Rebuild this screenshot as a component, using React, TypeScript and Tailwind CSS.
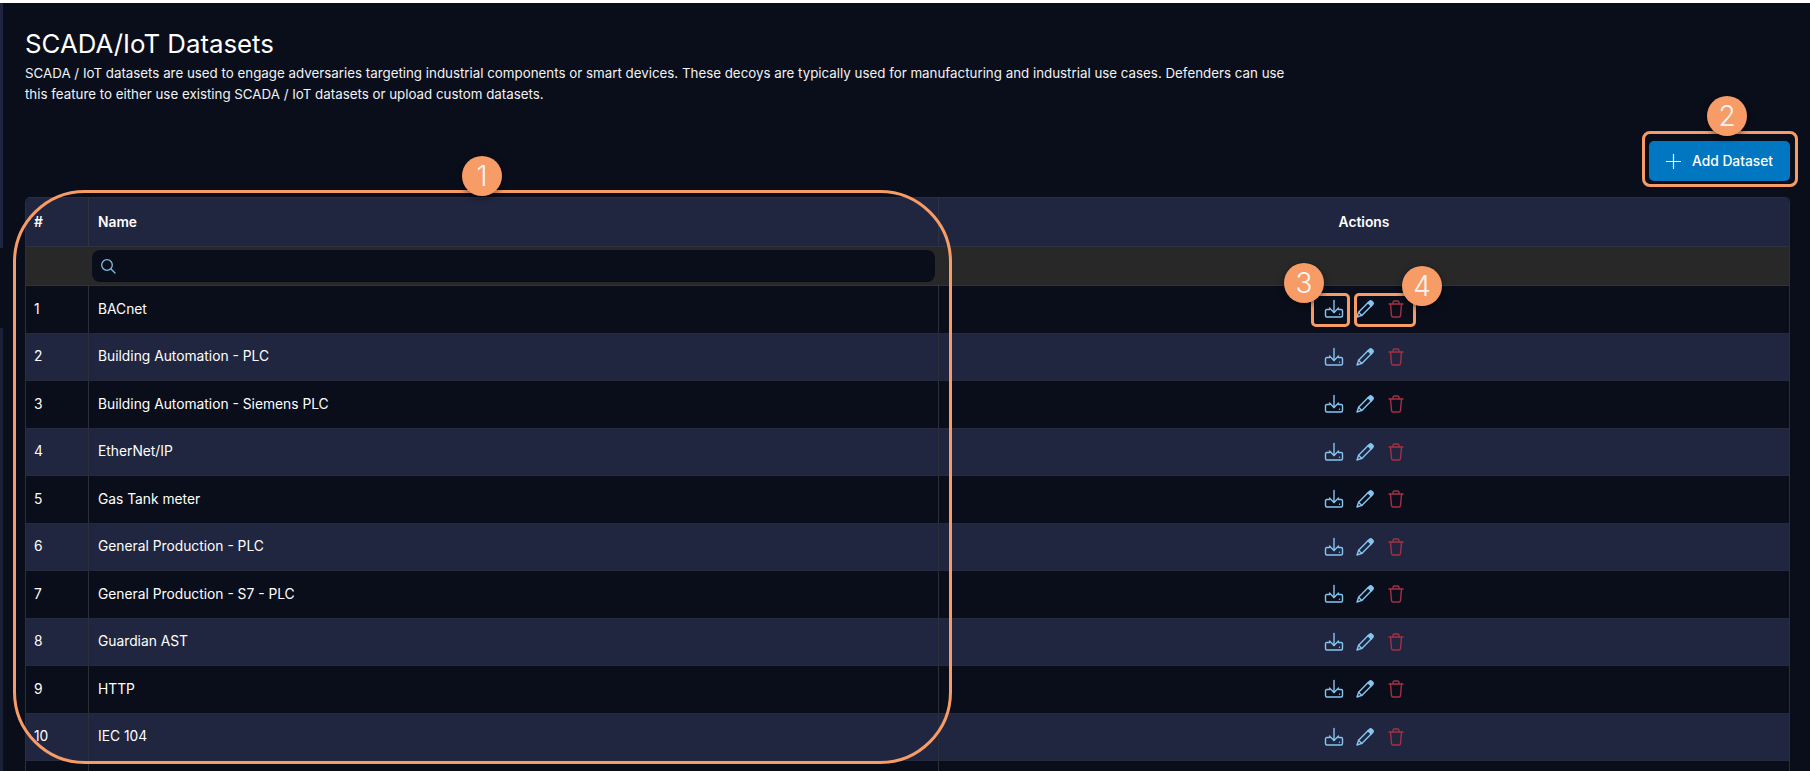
const rows = [
  'BACnet',
  'Building Automation - PLC',
  'Building Automation - Siemens PLC',
  'EtherNet/IP',
  'Gas Tank meter',
  'General Production - PLC',
  'General Production - S7 - PLC',
  'Guardian AST',
  'HTTP',
  'IEC 104',
];

function DownloadIcon() {
  return (
    <svg width="20" height="20" viewBox="0 0 20 20" fill="none" stroke="#86c5f0" strokeWidth="1.4" strokeLinecap="round" strokeLinejoin="round">
      <path d="M10 1.500v12" />
      <path d="M5.500 9l4.500 4.500L14.500 9" />
      <path d="M5.500 10.500H2.800c-.8 0-1.300.6-1.300 1.300v4.700c0 .8.6 1.500 1.400 1.500h14.200c.8 0 1.400-.7 1.400-1.500v-4.700c0-.7-.5-1.300-1.300-1.300h-2.700" />
      <path d="M15.500 15.300h.01" />
    </svg>
  );
}

function PencilIcon() {
  return (
    <svg width="20" height="20" viewBox="0 0 20 20" fill="none" stroke="#86c5f0" strokeWidth="1.4" strokeLinecap="round" strokeLinejoin="round">
      <path d="M13.200 3.600L3.600 13.200 2 18l4.800-1.600 9.600-9.600" />
      <path d="M3.600 13.200l3.200 3.200" />
      <path d="M13 3.800l1.600-1.600c.6-.6 1.500-.6 2.100 0l1.100 1.100c.6.6.6 1.500 0 2.100L16.200 7z" fill="#86c5f0" />
    </svg>
  );
}

function TrashIcon() {
  return (
    <svg width="20" height="20" viewBox="0 0 20 20" fill="none" stroke="#a33044" strokeWidth="1.4" strokeLinecap="round" strokeLinejoin="round">
      <path d="M3 5h14" />
      <path d="M7 4.800V3.500C7 2.700 7.600 2 8.400 2h3.200c.8 0 1.400.7 1.400 1.500v1.300" />
      <path d="M4.500 5l1 11.600c.1.800.7 1.400 1.500 1.400h6c.8 0 1.400-.6 1.500-1.400l1-11.600" />
    </svg>
  );
}

function SearchIcon() {
  return (
    <svg width="16" height="16" viewBox="0 0 16 16" fill="none" stroke="#7fbde6" strokeWidth="1.3" strokeLinecap="round">
      <circle cx="7" cy="7" r="5.300" />
      <path d="M11 11l4 4" />
    </svg>
  );
}

function Badge({ n, className }: { n: number; className: string }) {
  return (
    <div className={`absolute flex h-10 w-10 items-center justify-center rounded-full bg-[#f79c66] text-[28px] font-light text-[#f5f5f5] shadow-[0_2px_6px_rgba(0,0,0,0.5)] ${className}`}>
      {n}
    </div>
  );
}

export default function App() {
  return (
    <div className="relative flex h-[771px] w-[1810px] flex-col overflow-hidden bg-[#0a0e1a] font-['Inter',sans-serif] text-white">
      <div className="h-[3px] shrink-0 bg-white" />

      <div className="flex min-h-0 flex-1">
        {/* collapsed sidebar edge */}
        <div className="flex w-[3px] shrink-0 flex-col">
          <div className="h-[245px] bg-[#1f2540]" />
          <div className="h-[80px] bg-[#0a0e1a]" />
          <div className="flex-1 bg-[#1a2036]" />
        </div>

        <main className="min-w-0 flex-1 pl-[22px] pr-[20px]">
          <h1 className="mt-[27px] text-[25.8px] leading-[28px] font-normal">SCADA/IoT Datasets</h1>
          <p className="mt-[5px] w-[1270px] text-[13.33px] leading-[21px] text-[#f1f3f6]">
            SCADA / IoT datasets are used to engage adversaries targeting industrial components or smart devices. These decoys are typically used for manufacturing and industrial use cases. Defenders can use this feature to either use existing SCADA / IoT datasets or upload custom datasets.
          </p>

          <div className="mt-[36px] flex justify-end">
            <button className="flex h-10 w-[141px] items-center justify-center gap-[11px] rounded-[5px] bg-[#0077c0] text-[13.8px] font-medium">
              <svg width="15" height="15" viewBox="0 0 15 15" stroke="#fff" strokeWidth="1.2">
                <path d="M7.500 0v15M0 7.500h15" />
              </svg>
              Add Dataset
            </button>
          </div>

          <div className="mt-[16px] overflow-hidden rounded-t-[5px] border-x border-t border-[#2b2f38] text-[13.8px]">
            <div className="grid h-[48px] grid-cols-[63px_850px_1fr] items-stretch bg-[#20263f] font-semibold">
              <div className="flex items-center border-r border-[#2f3340] pl-[8px]">#</div>
              <div className="flex items-center border-r border-[#2f3340] pl-[9px]">Name</div>
              <div className="flex items-center justify-center">Actions</div>
            </div>
            <div className="grid h-[40px] grid-cols-[63px_850px_1fr] border-y border-[#2f333d] bg-[#282828]">
              <div />
              <div className="flex items-center pr-[4px] pl-[3px]">
                <div className="flex h-[32px] w-full items-center rounded-[8px] bg-[#0a0e1a] pl-[8px]">
                  <SearchIcon />
                </div>
              </div>
              <div />
            </div>
            {rows.map((name, i) => (
              <div
                key={name}
                className={`grid h-[47.5px] grid-cols-[63px_850px_1fr] border-b border-[#252b3d] ${i % 2 === 1 ? 'bg-[#20263f]' : 'bg-[#0a0e1a]'}`}
              >
                <div className="flex items-center border-r border-[#2b2f38] pl-[8px]">{i + 1}</div>
                <div className="flex items-center border-r border-[#2b2f38] pl-[9px]">{name}</div>
                <div className="flex items-center justify-center gap-[11px] pl-[1px]">
                  <DownloadIcon />
                  <PencilIcon />
                  <TrashIcon />
                </div>
              </div>
            ))}
            <div className="grid h-[47.5px] grid-cols-[63px_850px_1fr] bg-[#0a0e1a]">
              <div className="border-r border-[#2b2f38]" />
              <div className="border-r border-[#2b2f38]" />
              <div />
            </div>
          </div>
        </main>
      </div>

      {/* callouts drawn over the screenshot */}
      <div className="absolute top-[190px] left-[13px] h-[574px] w-[939px] rounded-[72px] border-[3px] border-[#f79c66]" />
      <div className="absolute top-[131px] left-[1642px] h-[56px] w-[156px] rounded-[8px] border-[3px] border-[#f79c66]" />
      <div className="absolute top-[293px] left-[1311px] h-[34px] w-[39px] rounded-[5px] border-[3px] border-[#f79c66]" />
      <div className="absolute top-[293px] left-[1354px] h-[34px] w-[62px] rounded-[5px] border-[3px] border-[#f79c66]" />
      <Badge n={1} className="top-[156px] left-[462px]" />
      <Badge n={2} className="top-[96px] left-[1707px]" />
      <Badge n={3} className="top-[263px] left-[1284px]" />
      <Badge n={4} className="top-[266px] left-[1402px]" />
    </div>
  );
}
